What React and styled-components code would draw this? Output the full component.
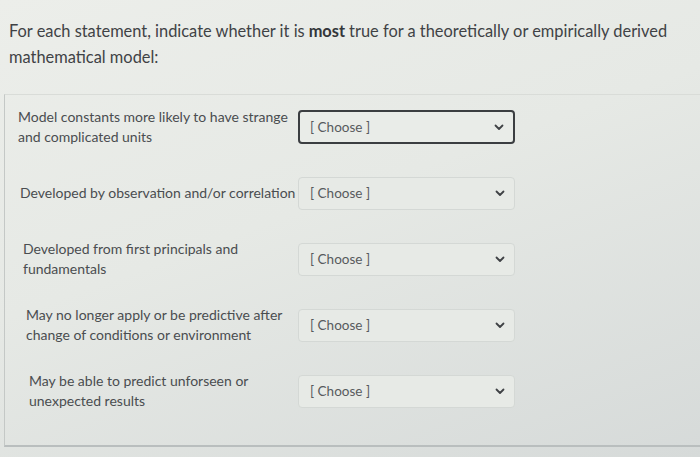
import styled, { createGlobalStyle } from "styled-components";

const GlobalStyle = createGlobalStyle`
  html, body {
    margin: 0;
    padding: 0;
  }
  body {
    width: 700px;
    height: 457px;
    overflow: hidden;
    font-family: Lato, "Noto Sans", "Liberation Sans", sans-serif;
    color: #45484b;
    background: linear-gradient(160deg, #eceeea 0%, #e6e9e5 45%, #d6dad9 100%);
  }
`;

const Page = styled.div`
  display: flex;
  flex-direction: column;
  padding: 18px 0 0 9px;
`;

const Prompt = styled.p`
  margin: 0 0 24px 0;
  font-size: 16.4px;
  line-height: 26px;
  color: #3f4245;
  max-width: 670px;
`;

const Strong = styled.strong`
  font-weight: 700;
  color: #34373a;
`;

const QuestionBox = styled.div`
  margin-left: -5px;
  border-top: 1px solid #d9dcd8;
  border-left: 1px solid #c4c8c6;
  border-bottom: 2px solid #b9bebe;
  padding: 12px 0 34px 13px;
  display: flex;
  flex-direction: column;
  gap: 26px;
`;

const Row = styled.div`
  display: grid;
  grid-template-columns: 280px 217px;
  align-items: center;
  height: 40px;
`;

const Label = styled.div`
  font-size: 14px;
  line-height: 20px;
  color: #4a4d50;
  padding-left: ${(p) => p.$shift}px;
  white-space: ${(p) => (p.$nowrap ? "nowrap" : "normal")};
`;

const Select = styled.div`
  height: ${(p) => (p.$focused ? 34 : 33)}px;
  box-sizing: border-box;
  display: flex;
  align-items: center;
  justify-content: space-between;
  padding: 0 9px 0 ${(p) => (p.$focused ? 10 : 11)}px;
  border-radius: 4px;
  border: ${(p) => (p.$focused ? "2px solid #3b3e41" : "1px solid #d4d8d5")};
  background: ${(p) => (p.$focused ? "#e9ece8" : "#e7eae6")};
`;

const Choose = styled.span`
  font-size: 13.5px;
  color: #575a5d;
`;

const Chevron = () => (
  <svg width="10" height="7" viewBox="0 0 10 7">
    <path
      d="M1.5 1.5 L5 5 L8.5 1.5"
      fill="none"
      stroke="#3f4245"
      strokeWidth="1.8"
      strokeLinecap="round"
      strokeLinejoin="round"
    />
  </svg>
);

const items = [
  { text: "Model constants more likely to have strange and complicated units", focused: true, shift: 0 },
  { text: "Developed by observation and/or correlation", shift: 2, nowrap: true },
  { text: "Developed from first principals and fundamentals", shift: 5 },
  { text: "May no longer apply or be predictive after change of conditions or environment", shift: 8 },
  { text: "May be able to predict unforseen or unexpected results", shift: 11 },
];

export default function App() {
  return (
    <>
      <GlobalStyle />
      <Page>
        <Prompt>
          {"For each statement, indicate whether it is"}
          <Strong>{" most "}</Strong>
          {"true for a theoretically or empirically derived mathematical model:"}
        </Prompt>
        <QuestionBox>
          {items.map((it, i) => (
            <Row key={i}>
              <Label $shift={it.shift} $nowrap={it.nowrap}>
                {it.text}
              </Label>
              <Select $focused={it.focused}>
                <Choose>[ Choose ]</Choose>
                <Chevron />
              </Select>
            </Row>
          ))}
        </QuestionBox>
      </Page>
    </>
  );
}
